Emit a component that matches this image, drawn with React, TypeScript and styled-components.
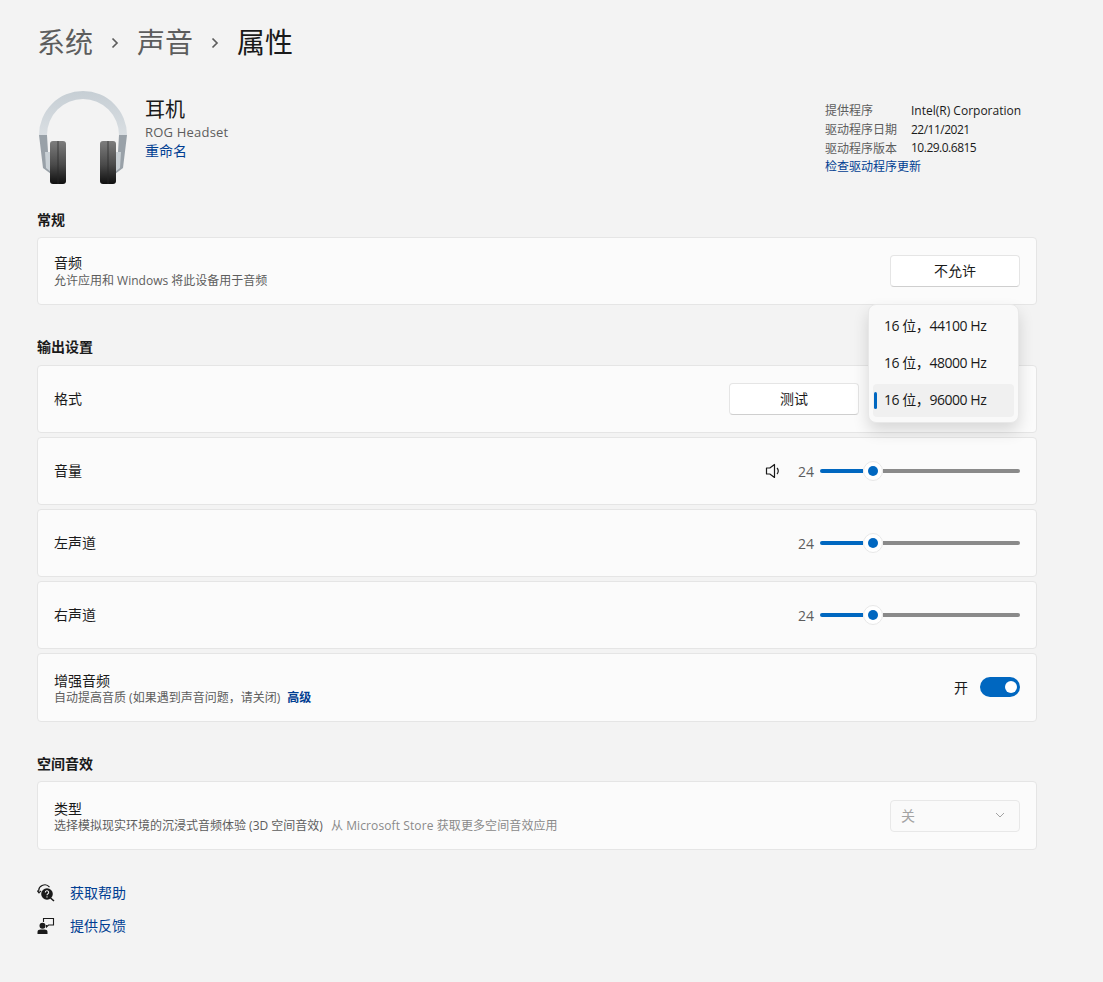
import React from "react";
import styled, { createGlobalStyle } from "styled-components";

const GlobalStyle = createGlobalStyle`
  * {
    box-sizing: border-box;
  }
  body {
    margin: 0;
    background: #f3f3f3;
    color: #1a1a1a;
    font-family: "Open Sans", "Noto Sans CJK SC", "Noto Sans", sans-serif;
    font-size: 14px;
  }
`;

const HeadphonesIcon = () => (
  <svg width="92" height="96" viewBox="0 0 92 96">
    <defs>
      <linearGradient id="band" x1="0" y1="0" x2="0" y2="1">
        <stop offset="0" stopColor="#c6ced4" />
        <stop offset="1" stopColor="#d9dee2" />
      </linearGradient>
      <linearGradient id="cup" x1="0" y1="0" x2="0" y2="1">
        <stop offset="0" stopColor="#7d7d7d" />
        <stop offset="0.55" stopColor="#4a4a4a" />
        <stop offset="1" stopColor="#0f0f0f" />
      </linearGradient>
    </defs>
    <path d="M2 45A44 44 0 0 1 90 45H82A36 36 0 0 0 10 45Z" fill="url(#band)" />
    <path d="M2 45H10L11 62L14 84L6 78Z" fill="#99a1a8" />
    <path d="M90 45H82L81 62L78 84L86 78Z" fill="#99a1a8" />
    <path d="M8 62H14V82L9 78Z" fill="#c9d0d5" />
    <path d="M84 62H78V82L83 78Z" fill="#c9d0d5" />
    <rect x="13" y="51" width="16" height="43" rx="3" fill="url(#cup)" />
    <rect x="63" y="51" width="16" height="43" rx="3" fill="url(#cup)" />
    <rect x="20.5" y="51" width="1" height="43" fill="#2a2a2a" opacity="0.7" />
    <rect x="70.5" y="51" width="1" height="43" fill="#2a2a2a" opacity="0.7" />
  </svg>
);

const Chevron = () => (
  <ChevronBox width="8" height="12" viewBox="0 0 8 12">
    <path d="M1.5 1.5L6 6L1.5 10.5" fill="none" stroke="#5d5d5d" strokeWidth="1.7" />
  </ChevronBox>
);

const SpeakerIcon = () => (
  <svg width="16" height="16" viewBox="0 0 16 16">
    <path
      d="M1.5 5H4.8L9.5 1.5V14.5L4.8 11H1.5Z"
      fill="none"
      stroke="#1a1a1a"
      strokeWidth="1.2"
      strokeLinejoin="round"
    />
    <path d="M12 5A4.2 4.2 0 0 1 12 11" fill="none" stroke="#1a1a1a" strokeWidth="1.2" />
  </svg>
);

const HelpIcon = () => (
  <svg width="18" height="18" viewBox="0 0 18 18">
    <path d="M2 8.5A6 6 0 0 1 12.5 3.2" fill="none" stroke="#1a1a1a" strokeWidth="1.2" />
    <path d="M0.2 6.6L2 9L4 6.8" fill="none" stroke="#1a1a1a" strokeWidth="1.1" />
    <circle cx="10" cy="10" r="5.8" fill="#1a1a1a" />
    <path d="M13.5 14L17 17" stroke="#1a1a1a" strokeWidth="1.6" />
    <path
      d="M8.3 8.5A1.7 1.7 0 1 1 10.7 10C10 10.4 10 10.8 10 11.3"
      fill="none"
      stroke="#f3f3f3"
      strokeWidth="1.1"
    />
    <circle cx="10" cy="12.9" r="0.7" fill="#f3f3f3" />
  </svg>
);

const FeedbackIcon = () => (
  <svg width="18" height="18" viewBox="0 0 18 18">
    <circle cx="5.5" cy="8.8" r="3" fill="#1a1a1a" />
    <path d="M0.5 17V15C0.5 13.2 2 12.5 3.5 12.5H7.5C9 12.5 10.5 13.2 10.5 15V17Z" fill="#1a1a1a" />
    <path
      d="M6.5 5V1.5H16.5V8H11.5L9.5 10V8"
      fill="none"
      stroke="#1a1a1a"
      strokeWidth="1.1"
    />
  </svg>
);

const formats = ["16 位，44100 Hz", "16 位，48000 Hz", "16 位，96000 Hz"];

const Slider = ({ value, icon }: { value: number; icon?: boolean }) => (
  <SliderGroup>
    {icon && (
      <SpeakerSlot>
        <SpeakerIcon />
      </SpeakerSlot>
    )}
    <SliderValue>{value}</SliderValue>
    <SliderTrack>
      <TrackFill />
      <Thumb />
      <TrackRest />
    </SliderTrack>
  </SliderGroup>
);

export default function App() {
  return (
    <Page>
      <GlobalStyle />
      <Breadcrumb>
        <Crumb>系统</Crumb>
        <Chevron />
        <Crumb>声音</Crumb>
        <Chevron />
        <Crumb $current>属性</Crumb>
      </Breadcrumb>

      <DeviceHeader>
        <HeadphonesIcon />
        <DeviceInfo>
          <DeviceName>耳机</DeviceName>
          <DeviceModel>ROG Headset</DeviceModel>
          <Link>重命名</Link>
        </DeviceInfo>
        <DriverGrid>
          <DriverLabel>提供程序</DriverLabel>
          <DriverValue>Intel(R) Corporation</DriverValue>
          <DriverLabel>驱动程序日期</DriverLabel>
          <DriverValue $digits>22/11/2021</DriverValue>
          <DriverLabel>驱动程序版本</DriverLabel>
          <DriverValue $digits>10.29.0.6815</DriverValue>
          <DriverLink>检查驱动程序更新</DriverLink>
        </DriverGrid>
      </DeviceHeader>

      <SectionTitle $top={25} $bottom={7}>常规</SectionTitle>
      <Card>
        <RowText>
          <RowTitle>音频</RowTitle>
          <RowSub>允许应用和 Windows 将此设备用于音频</RowSub>
        </RowText>
        <Button>不允许</Button>
      </Card>

      <SectionTitle $top={32} $bottom={8}>输出设置</SectionTitle>
      <CardStack>
        <Card>
          <SingleTitle>格式</SingleTitle>
          <Controls>
            <Button>测试</Button>
            <FormatAnchor>
              <Menu>
                {formats.map((f, i) => (
                  <MenuItem key={f} $selected={i === 2}>
                    {i === 2 && <MenuMark />}
                    {f}
                  </MenuItem>
                ))}
              </Menu>
            </FormatAnchor>
          </Controls>
        </Card>
        <Card>
          <SingleTitle>音量</SingleTitle>
          <Slider value={24} icon />
        </Card>
        <Card>
          <SingleTitle>左声道</SingleTitle>
          <Slider value={24} />
        </Card>
        <Card>
          <SingleTitle>右声道</SingleTitle>
          <Slider value={24} />
        </Card>
        <Card $tall>
          <RowText>
            <RowTitle>增强音频</RowTitle>
            <RowSub $tight>
              自动提高音质 (如果遇到声音问题，请关闭) <SubLink>高级</SubLink>
            </RowSub>
          </RowText>
          <ToggleGroup>
            开
            <Toggle>
              <ToggleKnob />
            </Toggle>
          </ToggleGroup>
        </Card>
      </CardStack>

      <SectionTitle $top={32} $bottom={7}>空间音效</SectionTitle>
      <Card $tall>
        <RowText>
          <RowTitle>类型</RowTitle>
          <RowSub $tight>
            选择模拟现实环境的沉浸式音频体验 (3D 空间音效)<MutedLink>从 Microsoft Store 获取更多空间音效应用</MutedLink>
          </RowSub>
        </RowText>
        <DisabledSelect>
          关
          <svg width="10" height="10" viewBox="0 0 10 10">
            <path d="M1 3L5 7L9 3" fill="none" stroke="#a3a3a3" strokeWidth="1" />
          </svg>
        </DisabledSelect>
      </Card>

      <HelpLinks>
        <HelpRow>
          <HelpIcon />
          <Link>获取帮助</Link>
        </HelpRow>
        <HelpRow>
          <FeedbackIcon />
          <Link>提供反馈</Link>
        </HelpRow>
      </HelpLinks>
    </Page>
  );
}

const Page = styled.div`
  width: 1103px;
  height: 982px;
  padding: 22px 66px 0 37px;
  overflow: hidden;
`;
const Breadcrumb = styled.div`
  display: flex;
  align-items: center;
  height: 40px;
`;
const Crumb = styled.span<{ $current?: boolean }>`
  font-size: 28px;
  line-height: 40px;
  color: ${({ $current }) => ($current ? "#1a1a1a" : "#5d5d5d")};
`;
const ChevronBox = styled.svg`
  margin: 2px 18px 0 18px;
`;
const DeviceHeader = styled.div`
  display: flex;
  align-items: flex-start;
  height: 95px;
  margin-top: 28px;
`;
const DeviceInfo = styled.div`
  display: flex;
  flex-direction: column;
  margin-left: 16px;
  padding-top: 6px;
`;
const DeviceName = styled.div`
  font-size: 20px;
  line-height: 28px;
`;
const DeviceModel = styled.div`
  font-size: 13px;
  line-height: 18px;
  margin-top: -1px;
  letter-spacing: 0.2px;
  color: #5d5d5d;
`;
const Link = styled.a`
  font-size: 14px;
  line-height: 20px;
  color: #003e92;
`;
const DriverGrid = styled.div`
  display: grid;
  grid-template-columns: 86px auto;
  grid-auto-rows: 18.7px;
  align-items: center;
  width: 212px;
  margin-left: auto;
  padding-top: 11px;
  font-size: 12px;
`;
const DriverLabel = styled.span`
  color: #5d5d5d;
`;
const DriverValue = styled.span<{ $digits?: boolean }>`
  font-weight: 500;
  letter-spacing: ${({ $digits }) => ($digits ? "-0.5px" : "0")};
  color: #1a1a1a;
  white-space: nowrap;
`;
const DriverLink = styled.a`
  grid-column: 1 / 3;
  color: #003e92;
`;
const SectionTitle = styled.div<{ $top: number; $bottom: number }>`
  font-size: 14px;
  font-weight: 600;
  line-height: 20px;
  margin-top: ${({ $top }) => $top}px;
  margin-bottom: ${({ $bottom }) => $bottom}px;
`;
const CardStack = styled.div`
  display: flex;
  flex-direction: column;
  gap: 4px;
`;
const Card = styled.div<{ $tall?: boolean }>`
  display: flex;
  align-items: center;
  justify-content: space-between;
  height: ${({ $tall }) => ($tall ? 69 : 68)}px;
  padding: 0 16px;
  background: #fbfbfb;
  border: 1px solid #e5e5e5;
  border-radius: 4px;
`;
const RowText = styled.div`
  display: flex;
  flex-direction: column;
`;
const RowTitle = styled.div`
  font-size: 14px;
  line-height: 19px;
`;
const SingleTitle = styled(RowTitle)`
  padding-bottom: 2px;
`;
const RowSub = styled.div<{ $tight?: boolean }>`
  font-size: 12px;
  line-height: ${({ $tight }) => ($tight ? 15 : 17)}px;
  color: #5d5d5d;
`;
const SubLink = styled.a`
  margin-left: 4px;
  font-weight: 600;
  color: #003e92;
`;
const MutedLink = styled.span`
  margin-left: 8px;
  letter-spacing: 0.1px;
  color: #8a8a8a;
`;
const Controls = styled.div`
  display: flex;
  align-items: center;
  gap: 2px;
`;
const Button = styled.div`
  display: flex;
  align-items: center;
  justify-content: center;
  width: 130px;
  height: 32px;
  padding-bottom: 2px;
  background: #fff;
  border: 1px solid #e5e5e5;
  border-bottom-color: #cfcfcf;
  border-radius: 4px;
  font-size: 14px;
`;
const FormatAnchor = styled.div`
  position: relative;
  width: 159px;
  height: 32px;
`;
const Menu = styled.div`
  position: absolute;
  left: 7px;
  top: -79px;
  display: flex;
  flex-direction: column;
  gap: 4px;
  width: 151px;
  height: 119px;
  padding: 5px 4px;
  background: #f9f9f9;
  border: 1px solid #e8e8e8;
  border-radius: 8px;
  box-shadow: 0 8px 16px rgba(0, 0, 0, 0.14);
`;
const MenuItem = styled.div<{ $selected?: boolean }>`
  position: relative;
  display: flex;
  align-items: center;
  height: 33px;
  padding: 0 0 4px 11px;
  border-radius: 4px;
  font-size: 14px;
  letter-spacing: -0.45px;
  color: #1a1a1a;
  background: ${({ $selected }) => ($selected ? "#f0f0f0" : "transparent")};
`;
const MenuMark = styled.span`
  position: absolute;
  left: 1px;
  top: 8px;
  width: 3px;
  height: 17px;
  border-radius: 2px;
  background: #0067c0;
`;
const SliderGroup = styled.div`
  display: flex;
  align-items: center;
`;
const SpeakerSlot = styled.div`
  display: flex;
  margin-right: 17px;
`;
const SliderValue = styled.span`
  width: 16px;
  margin-right: 6px;
  font-size: 14px;
  color: #5d5d5d;
`;
const SliderTrack = styled.div`
  display: flex;
  align-items: center;
  width: 200px;
`;
const TrackFill = styled.div`
  width: 43px;
  height: 4px;
  border-radius: 2px 0 0 2px;
  background: #0067c0;
`;
const Thumb = styled.div`
  display: flex;
  align-items: center;
  justify-content: center;
  width: 20px;
  height: 20px;
  border-radius: 50%;
  background: #fff;
  border: 1px solid #e8e8e8;
  &::after {
    content: "";
    width: 10px;
    height: 10px;
    border-radius: 50%;
    background: #0067c0;
  }
`;
const TrackRest = styled.div`
  flex: 1;
  height: 4px;
  border-radius: 0 2px 2px 0;
  background: #8a8a8a;
`;
const ToggleGroup = styled.div`
  display: flex;
  align-items: center;
  gap: 12px;
  padding-bottom: 1px;
  font-size: 14px;
`;
const Toggle = styled.div`
  display: flex;
  align-items: center;
  justify-content: flex-end;
  width: 40px;
  height: 20px;
  padding-right: 3px;
  border-radius: 10px;
  background: #0067c0;
`;
const ToggleKnob = styled.div`
  width: 12px;
  height: 12px;
  border-radius: 50%;
  background: #fff;
`;
const DisabledSelect = styled.div`
  display: flex;
  align-items: center;
  justify-content: space-between;
  width: 130px;
  height: 32px;
  padding: 0 14px 2px 10px;
  background: #fafafa;
  border: 1px solid #e8e8e8;
  border-radius: 4px;
  font-size: 14px;
  color: #a3a3a3;
`;
const HelpLinks = styled.div`
  display: flex;
  flex-direction: column;
  gap: 13px;
  margin-top: 33px;
`;
const HelpRow = styled.div`
  display: flex;
  align-items: center;
  gap: 15px;
  height: 20px;
`;
